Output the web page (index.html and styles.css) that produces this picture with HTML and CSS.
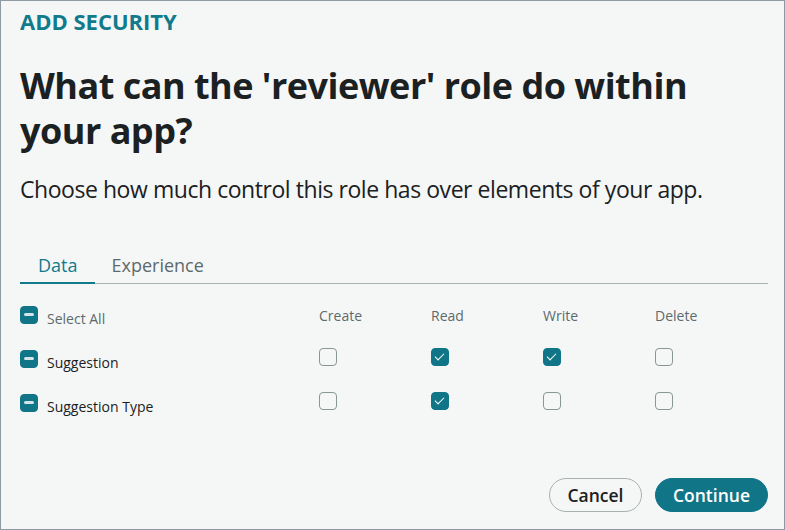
FILE: index.html
```html
<!DOCTYPE html>
<html lang="en">
<head>
    <meta charset="UTF-8">
    <meta name="viewport" content="width=device-width, initial-scale=1.0">
    <title>Add Security</title>
    <link rel="stylesheet" href="styles.css">
</head>
<body>
    <div class="dialog">
        <div class="eyebrow">ADD SECURITY</div>
        <h1 class="title">What can the 'reviewer' role do within your app?</h1>
        <p class="subtitle">Choose how much control this role has over elements of your app.</p>

        <div class="tabs">
            <button class="tab active">Data</button>
            <button class="tab">Experience</button>
        </div>

        <div class="grid">
            <div class="row header">
                <div class="name"><span class="box partial"></span><span class="label muted">Select All</span></div>
                <div class="col">Create</div>
                <div class="col">Read</div>
                <div class="col">Write</div>
                <div class="col">Delete</div>
            </div>
            <div class="row">
                <div class="name"><span class="box partial"></span><span class="label">Suggestion</span></div>
                <div class="col"><span class="box"></span></div>
                <div class="col"><span class="box checked"></span></div>
                <div class="col"><span class="box checked"></span></div>
                <div class="col"><span class="box"></span></div>
            </div>
            <div class="row">
                <div class="name"><span class="box partial"></span><span class="label">Suggestion Type</span></div>
                <div class="col"><span class="box"></span></div>
                <div class="col"><span class="box checked"></span></div>
                <div class="col"><span class="box"></span></div>
                <div class="col"><span class="box"></span></div>
            </div>
        </div>

        <div class="actions">
            <button class="btn cancel">Cancel</button>
            <button class="btn primary">Continue</button>
        </div>
    </div>
</body>
</html>
```

FILE: styles.css
```css
* {
    box-sizing: border-box;
}
html, body {
    margin: 0;
    height: 100%;
}
body {
    font-family: "Open Sans", "Noto Sans", sans-serif;
    color: #1b2122;
    background-color: #f5f7f7;
}
.dialog {
    height: 530px;
    border: 1px solid #8f9aa6;
    background-color: #f5f7f7;
    padding: 7px 16px 0 19px;
    display: flex;
    flex-direction: column;
}
.eyebrow {
    font-size: 22px;
    font-weight: 700;
    color: #117a8b;
    line-height: 26px;
}
.title {
    margin: 29px 0 0;
    font-size: 36px;
    letter-spacing: -0.5px;
    line-height: 45px;
    font-weight: 700;
    color: #1b2122;
}
.subtitle {
    margin: 21px 0 0;
    font-size: 23px;
    letter-spacing: -0.45px;
    line-height: 30px;
}
.tabs {
    margin-top: 49px;
    display: flex;
    border-bottom: 1px solid #a9b2b4;
}
.tab {
    font-family: inherit;
    font-size: 18px;
    line-height: 24px;
    background: none;
    border: none;
    padding: 0 18px 5px;
    color: #5d6a6c;
    border-bottom: 2px solid transparent;
    margin-bottom: -1px;
}
.tab + .tab {
    padding-left: 16px;
}
.tab.active {
    color: #117a8b;
    border-bottom-color: #117a8b;
}
.grid {
    margin-top: 9px;
}
.row {
    display: grid;
    grid-template-columns: 299px 112px 112px 112px 1fr;
    align-items: center;
    height: 44px;
    font-size: 14px;
}
.name {
    display: flex;
    align-items: center;
    gap: 9px;
}
.label {
    padding-top: 6px;
}
.col {
    color: #5d6a6c;
}
.label.muted {
    color: #5d6a6c;
}
.box {
    display: inline-block;
    width: 18px;
    height: 18px;
    border: 1.5px solid #8a9595;
    border-radius: 4px;
    position: relative;
}
.box.checked,
.box.partial {
    background-color: #0f7587;
    border-color: #0f7587;
}
.box.checked::after {
    content: "";
    position: absolute;
    left: 5px;
    top: 2px;
    width: 4px;
    height: 8px;
    border: solid #fff;
    border-width: 0 1.5px 1.5px 0;
    transform: rotate(45deg);
}
.box.partial::after {
    content: "";
    position: absolute;
    left: 3px;
    right: 3px;
    top: 6px;
    height: 3px;
    border-radius: 2px;
    background-color: #d5e4e7;
}
.actions {
    margin-top: auto;
    margin-bottom: 17px;
    display: flex;
    justify-content: flex-end;
    gap: 13px;
}
.btn {
    font-family: inherit;
    font-size: 17.5px;
    font-weight: 600;
    height: 34px;
    border-radius: 17px;
    cursor: pointer;
    padding: 0;
}
.cancel {
    width: 93px;
    background-color: #f5f7f7;
    border: 1px solid #a9b0b1;
    color: #1b2122;
}
.primary {
    width: 113px;
    background-color: #0f7587;
    border: 1px solid #0f7587;
    color: #fff;
}
```
